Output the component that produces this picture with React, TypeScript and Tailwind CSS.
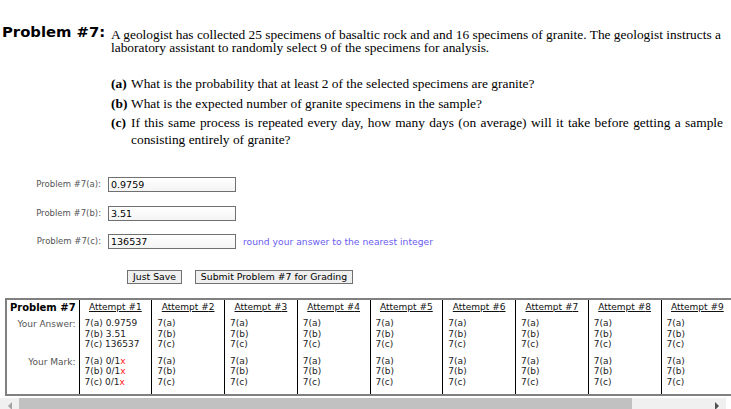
const attempts = [1, 2, 3, 4, 5, 6, 7, 8, 9, 10];

const parts = [
  { label: "Problem #7(a):", value: "0.9759" },
  { label: "Problem #7(b):", value: "3.51" },
  { label: "Problem #7(c):", value: "136537", hint: "round your answer to the nearest integer" },
];

const verdana = "[font-family:'DejaVu_Sans',Verdana,sans-serif]";

function Lines({ items }: { items: { k: string; v?: string; x?: boolean }[] }) {
  return (
    <div className="flex flex-col leading-[10.5px]">
      {items.map((it) => (
        <span key={it.k} className="whitespace-nowrap">
          {it.k}
          {it.v ? ` ${it.v}` : ""}
          {it.x && <span className="text-[#ff2020]">x</span>}
        </span>
      ))}
    </div>
  );
}

export default function App() {
  return (
    <div className="h-[409px] w-[731px] overflow-hidden bg-white text-black">
      <div className="flex pt-[23px] pl-[2px] pr-[6px]">
        <div className={`${verdana} shrink-0 whitespace-nowrap text-[14.8px] font-bold leading-[18px] w-[109px]`}>
          Problem #7:
        </div>
        <div className="pt-[5px] [font-family:'Liberation_Serif',serif] text-[13.4px] leading-[13px]">
          A geologist has collected 25 specimens of basaltic rock and and 16 specimens of granite. The geologist instructs a
          laboratory assistant to randomly select 9 of the specimens for analysis.
        </div>
      </div>

      <ol className="mt-[22px] ml-[111px] mr-[8px] flex flex-col gap-[4.5px] [font-family:'Liberation_Serif',serif] text-[13.4px] leading-[15px]">
        <li className="flex">
          <b className="w-[20px] shrink-0">(a)</b>
          <span>What is the probability that at least 2 of the selected specimens are granite?</span>
        </li>
        <li className="flex">
          <b className="w-[20px] shrink-0">(b)</b>
          <span>What is the expected number of granite specimens in the sample?</span>
        </li>
        <li className="flex">
          <b className="w-[20px] shrink-0">(c)</b>
          <span className="text-justify leading-[17px] -mt-[1px]">
            If this same process is repeated every day, how many days (on average) will it take before getting a sample
            consisting entirely of granite?
          </span>
        </li>
      </ol>

      <div className={`${verdana} mt-[29px] flex flex-col gap-[13.5px]`}>
        {parts.map((p) => (
          <div key={p.label} className="flex items-center">
            <span className="w-[101px] whitespace-nowrap text-right text-[8.5px] text-[#555]">{p.label}</span>
            <input
              readOnly
              value={p.value}
              className="ml-[7px] h-[15px] w-[128px] border border-[#707070] bg-gradient-to-b from-white to-[#f4f4f4] px-[2px] text-[9.5px] leading-[13px] text-black outline-none"
            />
            {p.hint && <span className="ml-[7px] whitespace-nowrap text-[9.2px] text-[#6a5cf0]">{p.hint}</span>}
          </div>
        ))}
      </div>

      <div className={`${verdana} mt-[21px] ml-[127px] flex gap-[13px] text-[9.3px]`}>
        <button className="h-[14px] w-[55px] whitespace-nowrap border border-[#707070] bg-[#efefef] leading-[12px]">
          Just Save
        </button>
        <button className="h-[14px] w-[158px] whitespace-nowrap border border-[#707070] bg-[#efefef] leading-[12px]">
          Submit Problem #7 for Grading
        </button>
      </div>

      <div className="mt-[14px] overflow-hidden pl-[5px]">
        <table className={`${verdana} w-[802px] table-fixed border-collapse border-2 border-[#808080] text-[9px] text-[#222]`}>
          <colgroup>
            <col className="w-[73px]" />
            {attempts.map((n) => (
              <col key={n} className="w-[72.75px]" />
            ))}
          </colgroup>
          <tbody>
            <tr>
              <th className="whitespace-nowrap border-r border-black pt-0 pb-[3px] text-center text-[10px] font-bold text-black">
                Problem #7
              </th>
              {attempts.map((n) => (
                <th key={n} className="whitespace-nowrap border-r border-black pt-0 pb-[3px] text-center font-normal text-[#111]">
                  <span className="underline">Attempt #{n}</span>
                </th>
              ))}
            </tr>
            <tr>
              <td className="whitespace-nowrap border-r border-black pr-[3px] align-top text-right text-[#555]">Your Answer:</td>
              <td className="border-r border-black pl-[5px] align-top">
                <Lines items={[{ k: "7(a)", v: "0.9759" }, { k: "7(b)", v: "3.51" }, { k: "7(c)", v: "136537" }]} />
              </td>
              {attempts.slice(1).map((n) => (
                <td key={n} className="border-r border-black pl-[5px] align-top">
                  <Lines items={[{ k: "7(a)" }, { k: "7(b)" }, { k: "7(c)" }]} />
                </td>
              ))}
            </tr>
            <tr>
              <td className="whitespace-nowrap border-r border-black pr-[3px] pt-[6px] pb-[7px] align-top text-right text-[#555]">
                Your Mark:
              </td>
              <td className="border-r border-black pl-[5px] pt-[6px] pb-[7px] align-top">
                <Lines
                  items={[
                    { k: "7(a)", v: "0/1", x: true },
                    { k: "7(b)", v: "0/1", x: true },
                    { k: "7(c)", v: "0/1", x: true },
                  ]}
                />
              </td>
              {attempts.slice(1).map((n) => (
                <td key={n} className="border-r border-black pl-[5px] pt-[6px] pb-[7px] align-top">
                  <Lines items={[{ k: "7(a)" }, { k: "7(b)" }, { k: "7(c)" }]} />
                </td>
              ))}
            </tr>
          </tbody>
        </table>
      </div>

      <div className="mt-[2px] flex h-[15px] w-[726px] items-center bg-[#f0f0f0]">
        <div className="flex w-[19px] justify-center">
          <span className="h-0 w-0 border-y-[4px] border-r-[4px] border-y-transparent border-r-[#a3a3a3]" />
        </div>
        <div className="h-full w-[613px] bg-[#c1c1c1]" />
        <div className="flex-1" />
        <div className="flex w-[19px] justify-center">
          <span className="h-0 w-0 border-y-[4px] border-l-[4px] border-y-transparent border-l-[#505050]" />
        </div>
      </div>
    </div>
  );
}
